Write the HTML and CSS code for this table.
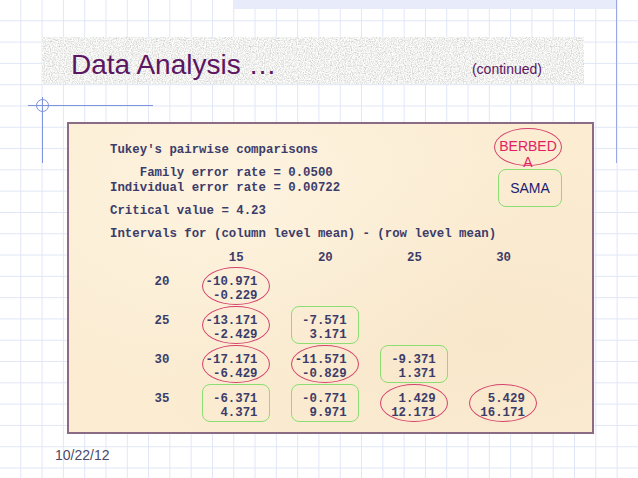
FILE: index.html
```html
<!DOCTYPE html>
<html>
<head>
<meta charset="utf-8">
<link rel="stylesheet" href="styles.css">
</head>
<body>
<div class="slide">
  <div class="vline"></div>
  <div class="cross">
    <div class="cross-h"></div>
    <div class="cross-v"></div>
    <div class="cross-c"></div>
  </div>
  <div class="topband"></div>
  <div class="titlebar">
    <svg class="noise" width="542" height="47"><filter id="n" x="0" y="0" width="100%" height="100%"><feTurbulence type="fractalNoise" baseFrequency="0.85" numOctaves="2" seed="3"/><feColorMatrix type="matrix" values="0.8 0 0 0 0.47  0.8 0 0 0 0.47  0.8 0 0 0 0.46  0 0 0 0 1"/></filter><rect width="542" height="47" filter="url(#n)"/></svg>
    <h1 class="title">Data Analysis …</h1>
    <span class="cont">(continued)</span>
  </div>
  <div class="panel">
    <div class="note-ellipse">BERBED<br>A</div>
    <div class="note-box">SAMA</div>
    <p class="mono">Tukey's pairwise comparisons</p>
    <p class="mono">    Family error rate = 0.0500<br>Individual error rate = 0.00722</p>
    <p class="mono">Critical value = 4.23</p>
    <p class="mono">Intervals for (column level mean) - (row level mean)</p>
    <div class="table mono">
      <div class="h"></div><div class="h">15</div><div class="h">20</div><div class="h">25</div><div class="h">30</div>

      <div class="lbl">20</div>
      <div class="cell"><div class="v oval">-10.971<br>-0.229</div></div>
      <div class="cell"></div><div class="cell"></div><div class="cell"></div>

      <div class="lbl">25</div>
      <div class="cell"><div class="v oval">-13.171<br>-2.429</div></div>
      <div class="cell"><div class="v box">-7.571<br>3.171</div></div>
      <div class="cell"></div><div class="cell"></div>

      <div class="lbl">30</div>
      <div class="cell"><div class="v oval">-17.171<br>-6.429</div></div>
      <div class="cell"><div class="v oval">-11.571<br>-0.829</div></div>
      <div class="cell"><div class="v box">-9.371<br>1.371</div></div>
      <div class="cell"></div>

      <div class="lbl">35</div>
      <div class="cell"><div class="v box">-6.371<br>4.371</div></div>
      <div class="cell"><div class="v box">-0.771<br>9.971</div></div>
      <div class="cell"><div class="v oval">1.429<br>12.171</div></div>
      <div class="cell"><div class="v oval">5.429<br>16.171</div></div>
    </div>
  </div>
  <div class="date">10/22/12</div>
</div>
</body>
</html>
```
FILE: styles.css
```css
html, body {
  margin: 0;
  padding: 0;
}
body {
  width: 638px;
  height: 478px;
  overflow: hidden;
  background-color: #ffffff;
  background-image:
    linear-gradient(to right, #e0e6f7 1px, transparent 1px),
    linear-gradient(to bottom, #e0e6f7 1px, transparent 1px);
  background-size: 21.3px 21.3px;
  background-position: -1px -1px;
  font-family: "Liberation Sans", Arial, sans-serif;
}
.slide {
  position: relative;
  width: 638px;
  height: 478px;
  display: flex;
  flex-direction: column;
}
.vline {
  position: absolute;
  left: 616px;
  top: 0;
  width: 1px;
  height: 163px;
  background: #9aa9e6;
}
.cross {
  position: absolute;
  left: 28px;
  top: 94px;
  width: 126px;
  height: 70px;
}
.cross-h {
  position: absolute;
  left: 0;
  top: 11px;
  width: 125px;
  height: 1px;
  background: #7f93dc;
}
.cross-v {
  position: absolute;
  left: 14px;
  top: 3px;
  width: 1px;
  height: 66px;
  background: #7f93dc;
}
.cross-c {
  position: absolute;
  left: 8px;
  top: 5px;
  width: 11px;
  height: 11px;
  border: 1px solid #7f93dc;
  border-radius: 50%;
}
.topband {
  margin-left: 233px;
  width: 384px;
  height: 9px;
  background: #e7ebfa;
  flex: none;
}
.titlebar {
  position: relative;
  margin-top: 28px;
  margin-left: 42px;
  width: 542px;
  height: 47px;
  box-sizing: border-box;
  padding: 12px 42px 0 29px;
  display: flex;
  align-items: baseline;
  justify-content: space-between;
  background: #e2e2e0;
  flex: none;
  overflow: hidden;
}
.noise {
  position: absolute;
  left: 0;
  top: 0;
}
.title {
  position: relative;
  margin: 0;
  font-weight: normal;
  font-size: 28px;
  line-height: 32px;
  color: #5c1560;
}
.cont {
  position: relative;
  font-size: 14px;
  color: #5c1560;
}
.panel {
  position: relative;
  margin-top: 38px;
  margin-left: 67px;
  width: 527px;
  height: 312px;
  box-sizing: border-box;
  border: 2px solid #8c6b84;
  background: #fbecd2;
  background-image: radial-gradient(ellipse at 30% 20%, rgba(255,248,232,0.6), transparent 60%),
                    radial-gradient(ellipse at 80% 70%, rgba(245,226,196,0.5), transparent 60%);
  padding: 19px 0 0 41px;
  flex: none;
}
.mono {
  font-family: "Liberation Mono", "Courier New", monospace;
  font-weight: bold;
  font-size: 12.38px;
  color: #3c3c6a;
  white-space: pre;
}
p.mono {
  margin: 0 0 8px 0;
  line-height: 15px;
}
.note-ellipse {
  position: absolute;
  left: 425px;
  top: 4px;
  width: 68px;
  height: 38px;
  box-sizing: border-box;
  border: 1.5px solid #d4416c;
  border-radius: 50%;
  padding-top: 9px;
  text-align: center;
  font-size: 14px;
  line-height: 16px;
  color: #e01f63;
}
.note-box {
  position: absolute;
  left: 429px;
  top: 45px;
  width: 64px;
  height: 38px;
  box-sizing: border-box;
  border: 1.5px solid #8ade72;
  border-radius: 8px;
  display: flex;
  align-items: center;
  justify-content: center;
  font-size: 14px;
  color: #1c1c72;
}
.table {
  margin-top: 7px;
  display: grid;
  grid-template-columns: 8ch repeat(4, 12ch);
  grid-template-rows: 16px;
  grid-auto-rows: 38px;
  row-gap: 1px;
  line-height: 13.5px;
}
.h {
  line-height: 16px;
  text-align: right;
  padding-right: 2ch;
}
.lbl {
  text-align: right;
  padding-top: 9px;
}
.cell {
  display: flex;
  justify-content: flex-end;
}
.v {
  width: 68px;
  height: 38px;
  margin-right: -11px;
  box-sizing: border-box;
  padding: 7px 11px 0 0;
  display: flex;
  flex-direction: column;
  justify-content: center;
  text-align: right;
  flex: none;
}
.oval {
  border: 1.5px solid #d4416c;
  border-radius: 50%;
}
.box {
  border: 1.5px solid #8ade72;
  border-radius: 8px;
}
.date {
  margin-top: 13px;
  margin-left: 55px;
  font-size: 14px;
  line-height: 16px;
  color: #4a4a6c;
}
```
